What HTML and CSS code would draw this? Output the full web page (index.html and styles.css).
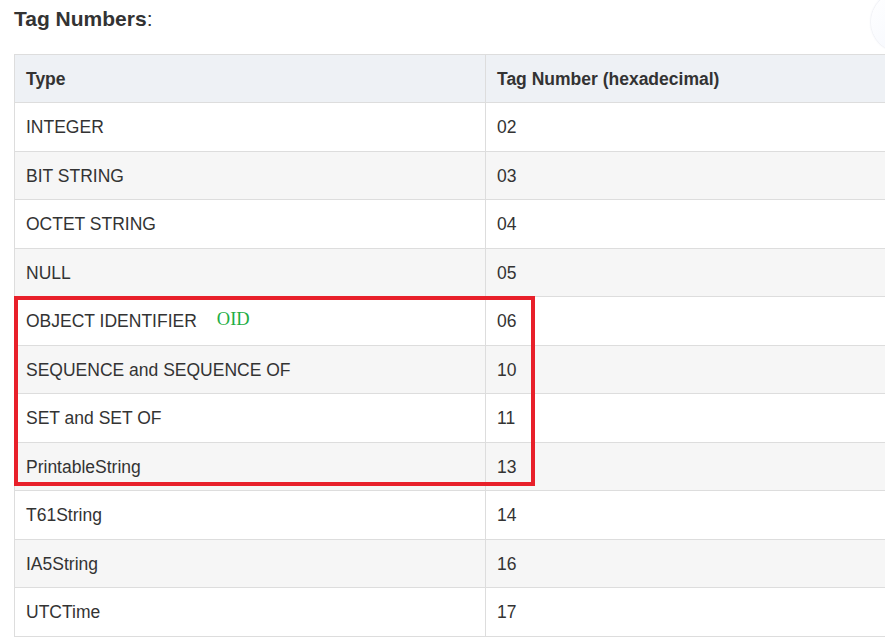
FILE: index.html
```html
<!DOCTYPE html>
<html>
<head>
<meta charset="utf-8">
<link rel="stylesheet" href="styles.css">
</head>
<body>
<div class="page">
  <h2 class="title">Tag Numbers<span class="colon">:</span></h2>
  <div class="table-wrap">
    <table class="tags">
      <thead>
        <tr><th class="c1">Type</th><th>Tag Number (hexadecimal)</th></tr>
      </thead>
      <tbody>
        <tr><td>INTEGER</td><td>02</td></tr>
        <tr><td>BIT STRING</td><td>03</td></tr>
        <tr><td>OCTET STRING</td><td>04</td></tr>
        <tr><td>NULL</td><td>05</td></tr>
        <tr><td>OBJECT IDENTIFIER<span class="note">OID</span></td><td>06</td></tr>
        <tr><td>SEQUENCE and SEQUENCE OF</td><td>10</td></tr>
        <tr><td>SET and SET OF</td><td>11</td></tr>
        <tr><td>PrintableString</td><td>13</td></tr>
        <tr><td>T61String</td><td>14</td></tr>
        <tr><td>IA5String</td><td>16</td></tr>
        <tr><td>UTCTime</td><td>17</td></tr>
      </tbody>
    </table>
    <div class="highlight"></div>
  </div>
  <div class="float-btn"></div>
</div>
</body>
</html>
```
FILE: styles.css
```css
html, body {
  margin: 0;
  padding: 0;
  background: #fff;
  overflow: hidden;
}
.page {
  position: relative;
  width: 885px;
  height: 641px;
  overflow: hidden;
  padding-left: 14px;
  box-sizing: border-box;
  font-family: "Liberation Sans", Arial, sans-serif;
  color: #333;
}
.title {
  margin: 0;
  padding-top: 7px;
  font-size: 21px;
  line-height: 24px;
  font-weight: bold;
  color: #333;
}
.title .colon {
  font-weight: normal;
}
.table-wrap {
  position: relative;
  margin-top: 23px;
  width: 960px;
}
.tags {
  border-collapse: collapse;
  width: 960px;
  font-size: 17.5px;
  color: #333;
}
.tags th, .tags td {
  border: 1px solid #ddd;
  text-align: left;
  padding: 16px 11px 14px 11px;
  line-height: 17.5px;
  vertical-align: middle;
}
.tags th {
  font-weight: bold;
  background: #eef1f5;
  line-height: 17px;
}
.tags .c1 {
  width: 448px;
}
.tags tbody tr:nth-child(even) td {
  background: #f6f6f6;
}
.tags tbody tr:nth-child(odd) td {
  background: #fff;
}
.note {
  font-family: "Liberation Serif", "Times New Roman", serif;
  color: #1fae45;
  font-size: 18.5px;
  line-height: 0;
  margin-left: 20px;
  vertical-align: 2px;
}
.highlight {
  position: absolute;
  left: 0;
  top: 242px;
  width: 521px;
  height: 190px;
  box-sizing: border-box;
  border: 4px solid #e8202a;
  pointer-events: none;
}
.float-btn {
  position: absolute;
  left: 871px;
  top: -8px;
  width: 60px;
  height: 60px;
  border-radius: 50%;
  background: linear-gradient(135deg, #ffffff 0%, #f3f6fd 100%);
  box-shadow: 0 0 2px rgba(150, 160, 190, 0.45);
}
```
